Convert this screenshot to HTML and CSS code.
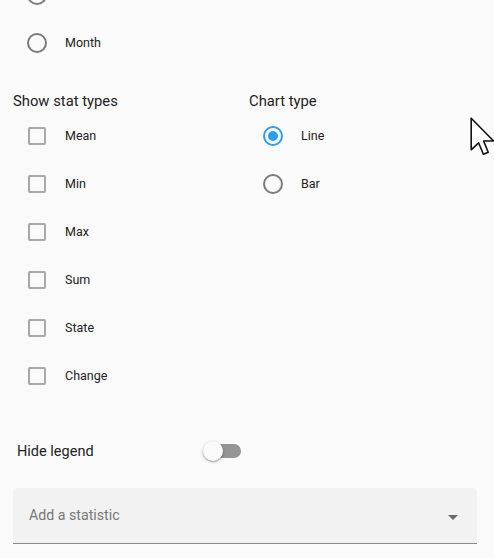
FILE: index.html
```html
<!DOCTYPE html>
<html>
<head>
<meta charset="utf-8">
<link rel="stylesheet" href="styles.css">
</head>
<body>
<div class="page">
  <div class="period">
    <div class="opt"><span class="radio"><span class="circle"></span></span></div>
    <div class="opt"><span class="radio"><span class="circle"></span></span><span class="lbl">Month</span></div>
  </div>

  <div class="cols">
    <div class="col">
      <div class="heading">Show stat types</div>
      <div class="opt"><span class="radio"><span class="box"></span></span><span class="lbl">Mean</span></div>
      <div class="opt"><span class="radio"><span class="box"></span></span><span class="lbl">Min</span></div>
      <div class="opt"><span class="radio"><span class="box"></span></span><span class="lbl">Max</span></div>
      <div class="opt"><span class="radio"><span class="box"></span></span><span class="lbl">Sum</span></div>
      <div class="opt"><span class="radio"><span class="box"></span></span><span class="lbl">State</span></div>
      <div class="opt"><span class="radio"><span class="box"></span></span><span class="lbl">Change</span></div>
    </div>
    <div class="col">
      <div class="heading">Chart type</div>
      <div class="opt"><span class="radio"><span class="circle checked"></span></span><span class="lbl">Line</span></div>
      <div class="opt"><span class="radio"><span class="circle"></span></span><span class="lbl">Bar</span></div>
    </div>
  </div>

  <div class="legend">
    <span class="legend-label">Hide legend</span>
    <span class="switch"><span class="track"></span><span class="thumb"></span></span>
  </div>

  <div class="select">
    <span class="select-label">Add a statistic</span>
    <span class="arrow"></span>
  </div>
</div>

<svg class="cursor" width="26" height="40" viewBox="0 0 13 20">
  <path d="M0.6 0.6 L0.6 16.4 L4.3 12.9 L6.7 18.6 L9.1 17.6 L6.8 12 L11.8 12 Z" fill="#fff" stroke="#111" stroke-width="0.8" stroke-linejoin="round"/>
</svg>
</body>
</html>
```

FILE: styles.css
```css
html, body {
  margin: 0;
  padding: 0;
  background: #fafafa;
  font-family: Roboto, "Noto Sans", "Liberation Sans", sans-serif;
  color: #212121;
  overflow: hidden;
}

.page {
  margin-top: -29px;
  width: 494px;
}

.period {
  padding-left: 13px;
}

.opt {
  display: flex;
  align-items: center;
  height: 48px;
}

.radio {
  width: 48px;
  height: 48px;
  display: flex;
  align-items: center;
  justify-content: center;
  flex: none;
}

.circle {
  width: 20px;
  height: 20px;
  box-sizing: border-box;
  border: 2px solid #7a7a7a;
  border-radius: 50%;
  display: flex;
  align-items: center;
  justify-content: center;
}

.circle.checked {
  border-color: #2d9ef2;
}

.circle.checked::after {
  content: "";
  width: 10px;
  height: 10px;
  border-radius: 50%;
  background: #2d9ef2;
}

.box {
  width: 18px;
  height: 18px;
  box-sizing: border-box;
  border: 2px solid #a8a8a8;
  border-radius: 2px;
}

.lbl {
  margin-left: 4px;
  margin-bottom: 2px;
  font-size: 12.5px;
  color: #222;
}

.cols {
  display: grid;
  grid-template-columns: 236px 1fr;
  padding-left: 13px;
  margin-top: 25px;
}

.heading {
  font-size: 14.8px;
  line-height: 19px;
  height: 20px;
  color: #222;
}

.legend {
  display: flex;
  align-items: center;
  height: 48px;
  margin-top: 27px;
  padding-left: 17px;
}

.legend-label {
  width: 186px;
  font-size: 14.5px;
  color: #222;
}

.switch {
  position: relative;
  width: 38px;
  height: 20px;
  display: flex;
  align-items: center;
}

.track {
  margin-left: 2px;
  width: 36px;
  height: 14px;
  border-radius: 7px;
  background: #959595;
}

.thumb {
  position: absolute;
  left: 0;
  top: 0;
  width: 20px;
  height: 20px;
  border-radius: 50%;
  background: #fafafa;
  box-shadow: 0 1px 3px rgba(0,0,0,0.3), 0 1px 1px rgba(0,0,0,0.14);
}

.select {
  margin: 13px 0 0 13px;
  width: 464px;
  height: 56px;
  box-sizing: border-box;
  background: #f2f2f3;
  border-radius: 4px 4px 0 0;
  border-bottom: 1px solid #8a8a8a;
  display: flex;
  align-items: center;
  justify-content: space-between;
  padding: 0 19px 0 16px;
}

.select-label {
  font-size: 14.2px;
  color: #777;
  margin-bottom: 2px;
}

.arrow {
  width: 0;
  height: 0;
  border-left: 5px solid transparent;
  border-right: 5px solid transparent;
  border-top: 5px solid #6b6b6b;
  margin-top: 3px;
}

.cursor {
  position: absolute;
  left: 470px;
  top: 117px;
}
```
